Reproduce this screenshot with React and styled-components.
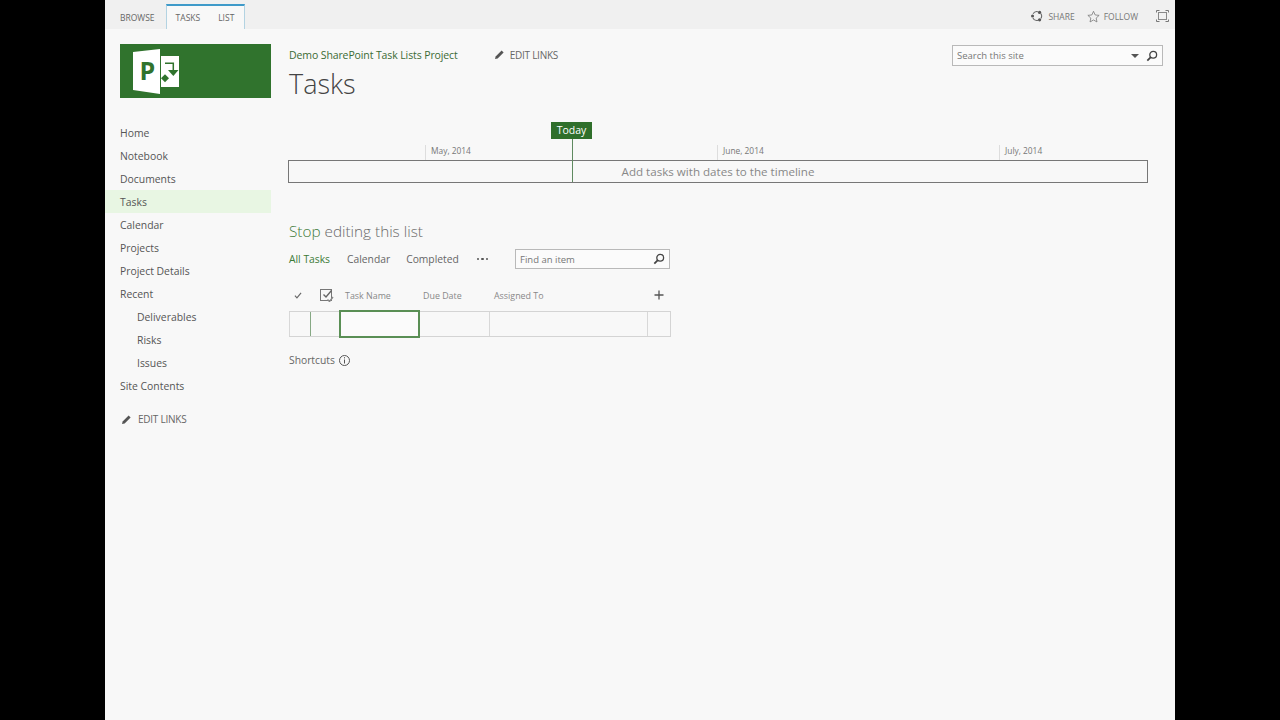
import React from "react";
import styled, { createGlobalStyle } from "styled-components";

const Global = createGlobalStyle`
  html, body { margin: 0; padding: 0; background: #000; height: 100%; overflow: hidden; }
  #root { height: 100%; }
  * { box-sizing: border-box; }
`;
const F = `"Open Sans", "Noto Sans", sans-serif`;

const Page = styled.div`
  width: 1070px; height: 720px; margin: 0 auto; background: #f8f8f8;
  font-family: ${F}; color: #555; overflow: hidden;
`;
const TopBar = styled.header`
  height: 29px; background: #f0f0f0; display: flex; align-items: flex-end;
  padding-left: 7px; padding-right: 6px; justify-content: space-between;
`;
const TabGroup = styled.div`display: flex; align-items: flex-end;`;
const RibbonTab = styled.div`
  font-size: 8.5px; color: #666; height: 24px; line-height: 26px; padding: 0 8px;
`;
const ActiveTabs = styled.div`
  display: flex; height: 25px; margin-left: 3px; background: #f8f8f8;
  border: 1px solid #b3d3e2; border-top: 2px solid #3f9ac9; border-bottom: 0; padding: 0 6px 0 5px;
`;
const ActiveTab = styled.div`
  font-size: 8.5px; color: #666; line-height: 23px; padding: 0 4px; margin-right: ${p => p.$gap || 0}px;
`;
const Actions = styled.div`display: flex; align-items: center; height: 29px; padding-top: 3px;`;
const Action = styled.div`
  display: flex; align-items: center; gap: ${p => p.$gap}px; font-size: 8.5px; color: #777; margin-right: ${p => p.$mr}px;
`;
const Main = styled.div`display: flex;`;
const Side = styled.nav`width: 166px; padding-top: 15px; flex: none;`;
const Logo = styled.div`margin-left: 15px; width: 151px; height: 54px; background: #30732d; display: block;`;
const NavList = styled.div`margin-top: 23px;`;
const NavItem = styled.div`
  height: 23px; line-height: 24px; font-size: 10.4px; color: #555;
  padding-left: ${p => (p.$sub ? 32 : 15)}px;
  background: ${p => (p.$active ? "#e8f6e3" : "transparent")};
`;
const NavEdit = styled.div`
  display: flex; align-items: center; padding-left: 16px; gap: 6px; margin-top: 15px;
  font-size: 10px; color: #666; letter-spacing: -0.25px;
`;
const Content = styled.main`flex: 1; padding-left: 18px; padding-right: 12px; min-width: 0;`;
const HeadRow = styled.div`display: flex; align-items: flex-start; justify-content: space-between; padding-top: 16px;`;
const TitleArea = styled.div``;
const SiteLine = styled.div`display: flex; align-items: center; height: 19px; gap: 36px;`;
const SiteName = styled.div`font-size: 10.5px; color: #3b6b35; letter-spacing: -0.11px;`;
const EditLinks = styled.div`display: flex; align-items: center; gap: 5px; font-size: 10px; color: #666; letter-spacing: -0.25px;`;
const PageTitle = styled.h1`margin: 4px 0 0; font-size: 27px; line-height: 32px; font-weight: 300; color: #444;`;
const SiteSearch = styled.div`
  width: 211px; height: 21px; border: 1px solid #b9b9b9; background: #fbfbfb;
  display: flex; align-items: center; padding: 0 4px; font-size: 9.5px; color: #777;
  justify-content: space-between;
`;
const SearchIcons = styled.div`display: flex; align-items: center; gap: 7px;`;
const Caret = styled.div`width: 0; height: 0; border-left: 4px solid transparent; border-right: 4px solid transparent; border-top: 4px solid #555;`;
const Timeline = styled.section`
  position: relative; margin-left: -1px; margin-top: 22px; width: 860px; height: 61px;
`;
const TodayFlag = styled.div`
  position: absolute; left: 263px; top: 0; width: 41px; height: 17px; background: #2f6f2b; color: #fff;
  font-size: 10.5px; line-height: 17px; text-align: center;
`;
const TodayLine = styled.div`position: absolute; left: 284px; top: 17px; width: 1px; height: 43px; background: #5f8a60;`;
const TimelineBar = styled.div`
  position: absolute; left: 0; top: 38px; width: 860px; height: 23px; border: 1px solid #777;
  font-size: 11.6px; color: #888; text-align: center; line-height: 21px;
`;
const Month = styled.div`
  position: absolute; top: 23px; left: ${p => p.$x}px; font-size: 8.4px; color: #777; padding-left: 5px;
  border-left: 1px solid #ddd; height: 15px; line-height: 11px;
`;
const EditHeading = styled.div`margin-top: 38px; font-size: 15.3px; line-height: 20px; color: #6a6a6a; font-weight: 300;`;
const StopWord = styled.span`color: #3f7a39;`;
const ViewRow = styled.div`display: flex; align-items: center; height: 20px; margin-top: 8px; width: 381px; font-size: 10.3px;`;
const ViewTab = styled.div`color: ${p => (p.$on ? "#3b7a36" : "#666")}; margin-right: ${p => p.$mr}px;`;
const Dots = styled.div`display: flex; gap: 2px;`;
const Dot = styled.i`display: block; width: 2.5px; height: 2.5px; background: #555; border-radius: 50%;`;
const FindBox = styled.div`
  width: 155px; height: 20px; margin-left: auto; border: 1px solid #b9b9b9; background: #fbfbfb; display: flex; align-items: center;
  justify-content: space-between; padding: 0 4px; font-size: 9.5px; color: #777;
`;
const GridHead = styled.div`
  display: grid; grid-template-columns: 21px 29px 81px 69px 158px 24px; width: 382px; height: 26px; margin-top: 13px;
  align-items: center; font-size: 8.9px; color: #888;
`;
const HeadCell = styled.div`
  display: flex; align-items: center; justify-content: ${p => (p.$center ? "center" : "flex-start")};
  padding-left: ${p => p.$pl || 0}px; padding-right: ${p => p.$pr || 0}px;
`;
const GridRow = styled.div`
  display: grid; grid-template-columns: 21px 29px 81px 69px 158px 24px; width: 382px; height: 26px;
  margin-top: 3px; border-top: 1px solid #d4d4d4; border-bottom: 1px solid #d4d4d4;
`;
const Cell = styled.div`
  border-left: ${p => (p.$green ? "1px solid #86a884" : p.$none ? "0" : "1px solid #d8d8d8")};
  ${p => p.$last && "border-right: 1px solid #d4d4d4;"}
`;
const EditCell = styled.div`border: 2px solid #5a8f55; margin: -2px 0; background: #fbfbfb;`;
const Shortcuts = styled.div`display: flex; align-items: center; gap: 3px; margin-top: 15px; font-size: 10.3px; color: #666; height: 16px;`;

const SearchGlyph = ({ s = 12 }) => (
  <svg width={s} height={s} viewBox="0 0 12 12" fill="none" stroke="#444" strokeWidth="1.3">
    <circle cx="7.2" cy="4.8" r="3.4" /><path d="M4.8 7.2 1.3 10.7" strokeWidth="1.8" />
  </svg>
);
const Pencil = () => (
  <svg width="11" height="11" viewBox="0 0 11 11">
    <path d="M1 10l.6-2.6L7.6 1.4l2 2-6 6z" fill="#555" />
  </svg>
);
const ShareIcon = () => (
  <svg width="12" height="12" viewBox="0 0 14 14" fill="none" stroke="#666" strokeWidth="1.2">
    <path d="M2.4 4.4A5.2 5.2 0 0 1 8 1.9M11.5 4.2a5.2 5.2 0 0 1 0 5.8M8.2 12.1a5.2 5.2 0 0 1-6-2.8" />
    <circle cx="10" cy="2.8" r="1.9" fill="#555" stroke="none" />
    <circle cx="1.8" cy="7" r="1.8" fill="#555" stroke="none" />
    <circle cx="10" cy="11.4" r="1.9" fill="#555" stroke="none" />
  </svg>
);
const StarIcon = () => (
  <svg width="13" height="13" viewBox="0 0 15 14" fill="none" stroke="#777" strokeWidth="0.9">
    <path d="M7.5 1l1.9 4.2 4.6.5-3.4 3.1.9 4.5-4-2.3-4 2.3.9-4.5L1 5.7l4.6-.5z" />
  </svg>
);
const FocusIcon = () => (
  <svg width="13" height="12" viewBox="0 0 13 12" fill="none" stroke="#777">
    <path d="M.5 2.5V.5H3.5M9.5 .5h3V2.5M12.5 9.500v2H9.500M3.500 11.500H.5V9.500" />
    <rect x="2.5" y="2.5" width="8" height="7" stroke="#888" />
  </svg>
);
const CheckIcon = () => (
  <svg width="8" height="7" viewBox="0 0 9 8" fill="none" stroke="#666" strokeWidth="1.3"><path d="M1 4.2 3.3 6.8 8 1" /></svg>
);
const CheckAllIcon = () => (
  <svg width="14" height="14" viewBox="0 0 14 14" fill="none">
    <rect x="0.5" y="1.5" width="11" height="11" stroke="#777" />
    <path d="M3.5 6.500l2.500 2.500 5.500-6.500" stroke="#666" strokeWidth="1.400" />
    <path d="M7.500 11.500l2 2 3.500-4.500" stroke="#888" strokeWidth="1.400" />
  </svg>
);
const PlusIcon = () => (
  <svg width="10" height="10" viewBox="0 0 10 10" stroke="#555" strokeWidth="1.3"><path d="M5 .5v9M.5 5h9" /></svg>
);
const InfoIcon = () => (
  <svg width="13" height="13" viewBox="0 0 13 13" fill="none" stroke="#555">
    <circle cx="6.5" cy="6.5" r="5" /><path d="M6.5 5.5v4" /><path d="M6.5 3.2v1.2" />
  </svg>
);
const LogoMark = () => (
  <Logo as="svg" viewBox="0 0 151 54">
    <path d="M41 12h18v31H41z" fill="#fff" />
    <path d="M13 8 40 5v45L13 46z" fill="#fff" />
    <text x="19.5" y="36" fontFamily={`"Open Sans", sans-serif`} fontWeight="700" fontSize="25" fill="#30732d">P</text>
    <path d="M45 19.3h8.3V27" fill="none" stroke="#30732d" strokeWidth="1.5" />
    <path d="M48 26h10.5l-5.2 6z" fill="#30732d" />
    <path d="M45 30.3l4 4-4 4-4-4z" fill="#30732d" />
  </Logo>
);

const nav = [
  ["Home"], ["Notebook"], ["Documents"], ["Tasks", "active"], ["Calendar"], ["Projects"],
  ["Project Details"], ["Recent"], ["Deliverables", "sub"], ["Risks", "sub"], ["Issues", "sub"], ["Site Contents"],
];
const months = [["May, 2014", 137], ["June, 2014", 429], ["July, 2014", 711]];

export default function App() {
  return (
    <Page>
      <Global />
      <TopBar>
        <TabGroup>
          <RibbonTab>BROWSE</RibbonTab>
          <ActiveTabs>
            <ActiveTab $gap={10}>TASKS</ActiveTab>
            <ActiveTab>LIST</ActiveTab>
          </ActiveTabs>
        </TabGroup>
        <Actions>
          <Action $mr={12} $gap={5}><ShareIcon />SHARE</Action>
          <Action $mr={18} $gap={4}><StarIcon />FOLLOW</Action>
          <FocusIcon />
        </Actions>
      </TopBar>
      <Main>
        <Side>
          <LogoMark />
          <NavList>
            {nav.map(([t, k]) => (
              <NavItem key={t} $active={k === "active"} $sub={k === "sub"}>{t}</NavItem>
            ))}
          </NavList>
          <NavEdit><Pencil />EDIT LINKS</NavEdit>
        </Side>
        <Content>
          <HeadRow>
            <TitleArea>
              <SiteLine>
                <SiteName>Demo SharePoint Task Lists Project</SiteName>
                <EditLinks><Pencil />EDIT LINKS</EditLinks>
              </SiteLine>
              <PageTitle>Tasks</PageTitle>
            </TitleArea>
            <SiteSearch>
              Search this site
              <SearchIcons><Caret /><SearchGlyph /></SearchIcons>
            </SiteSearch>
          </HeadRow>
          <Timeline>
            {months.map(([t, x]) => <Month key={t} $x={x}>{t}</Month>)}
            <TimelineBar>Add tasks with dates to the timeline</TimelineBar>
            <TodayFlag>Today</TodayFlag>
            <TodayLine />
          </Timeline>
          <EditHeading><StopWord>Stop</StopWord> editing this list</EditHeading>
          <ViewRow>
            <ViewTab $on $mr={17}>All Tasks</ViewTab>
            <ViewTab $mr={16}>Calendar</ViewTab>
            <ViewTab $mr={18}>Completed</ViewTab>
            <Dots><Dot /><Dot /><Dot /></Dots>
            <FindBox>Find an item<SearchGlyph /></FindBox>
          </ViewRow>
          <GridHead>
            <HeadCell $center $pr={3}><CheckIcon /></HeadCell>
            <HeadCell $center $pl={4}><CheckAllIcon /></HeadCell>
            <HeadCell $pl={6}>Task Name</HeadCell>
            <HeadCell $pl={3}>Due Date</HeadCell>
            <HeadCell $pl={5}>Assigned To</HeadCell>
            <HeadCell $center $pr={1}><PlusIcon /></HeadCell>
          </GridHead>
          <GridRow>
            <Cell />
            <Cell $green />
            <EditCell />
            <Cell $none />
            <Cell />
            <Cell $last />
          </GridRow>
          <Shortcuts>Shortcuts <InfoIcon /></Shortcuts>
        </Content>
      </Main>
    </Page>
  );
}
